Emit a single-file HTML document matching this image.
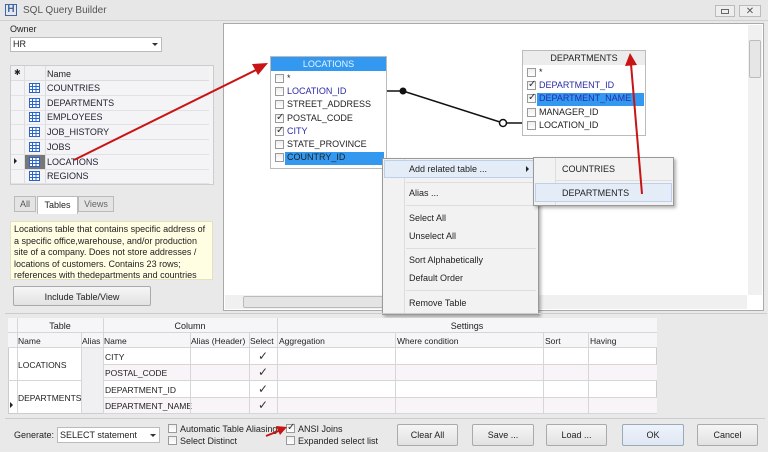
<!DOCTYPE html><html><head><style>
*{box-sizing:border-box;margin:0;padding:0}
body{width:768px;height:452px;overflow:hidden;background:#e9e9ea;font-family:"Liberation Sans",sans-serif;font-size:9px;color:#222;position:relative}
.a{position:absolute;white-space:nowrap}
.cb{position:absolute;width:9px;height:9px;border:1px solid #9a9a9a;background:linear-gradient(#eee,#fff)}
.ck::after{content:"✓";position:absolute;left:0;top:-3px;font-size:10px;color:#333}
.btn{position:absolute;border:1px solid #aaa;border-radius:2px;background:linear-gradient(#f6f6f6,#e2e2e2);text-align:center;line-height:20px;font-size:9px}
.tbl{color:#223}
.blue{color:#2a2aa8}
</style></head><body>
<div class="a" style="left:0;top:0;width:768px;height:21px;background:#e7e7e8;border-bottom:1px solid #d0d0d0"></div>
<div class="a" style="left:5px;top:4px;width:12px;height:12px;border:1px solid #3e66a8;color:#3e66a8;font-size:10px;line-height:10px;text-align:center;font-weight:bold">H</div>
<div class="a" style="left:23px;top:5px;font-size:10px;color:#555">SQL Query Builder</div>
<div class="a" style="left:715px;top:5px;width:20px;height:12px;border:1px solid #bbb;background:#eee"></div>
<div class="a" style="left:721px;top:9px;width:8px;height:5px;border:1px solid #666"></div>
<div class="a" style="left:739px;top:5px;width:22px;height:12px;border:1px solid #bbb;background:#eee;text-align:center;line-height:11px;color:#555;font-size:10px">✕</div>
<div class="a" style="left:10px;top:24px">Owner</div>
<div class="a" style="left:10px;top:37px;width:152px;height:15px;background:#fff;border:1px solid #bbb;padding-left:2px;line-height:13px">HR</div>
<div class="a" style="left:152px;top:43px;border-left:3px solid transparent;border-right:3px solid transparent;border-top:3px solid #333"></div>
<div class="a" style="left:10px;top:65px;width:204px;height:120px;background:#f4f4f6;border:1px solid #ccc"></div>
<div class="a" style="left:11px;top:66px;width:198px;height:15px;background:#f1f1f3;border-bottom:1px solid #ddd"></div>
<div class="a" style="left:14px;top:68px;font-size:8px">✱</div>
<div class="a" style="left:24px;top:66px;width:1px;height:117px;background:#ddd"></div>
<div class="a" style="left:45px;top:66px;width:1px;height:117px;background:#ddd"></div>
<div class="a" style="left:47px;top:69px">Name</div>
<div class="a" style="left:25px;top:155px;width:20px;height:14px;background:#777"></div>
<div class="a" style="left:14px;top:158px;border-top:3px solid transparent;border-bottom:3px solid transparent;border-left:3px solid #222"></div>
<div id="lst"></div>
<div class="a" style="left:14px;top:196px;width:22px;height:16px;border:1px solid #bbb;background:#e4e4e4;text-align:center;line-height:14px;color:#555">All</div>
<div class="a" style="left:37px;top:196px;width:41px;height:18px;border:1px solid #bbb;border-bottom:none;background:#fff;text-align:center;line-height:16px">Tables</div>
<div class="a" style="left:78px;top:196px;width:36px;height:16px;border:1px solid #bbb;background:#e4e4e4;text-align:center;line-height:14px;color:#666">Views</div>
<div class="a" style="left:10px;top:221px;width:203px;height:59px;background:#fffde2;border:1px solid #e4e0c0;padding:2px 3px;line-height:11.5px;white-space:normal;font-size:9px">Locations table that contains specific address of a specific office,warehouse, and/or production site of a company. Does not store addresses / locations of customers. Contains 23 rows; references with thedepartments and countries</div>
<div class="btn" style="left:13px;top:286px;width:138px;height:20px">Include Table/View</div>
<div class="a" style="left:223px;top:23px;width:541px;height:288px;background:#fff;border:1px solid #aaa"></div>
<div class="a" style="left:748px;top:25px;width:14px;height:270px;background:#f0f0f0"></div>
<div class="a" style="left:749px;top:40px;width:12px;height:38px;border:1px solid #bbb;border-radius:2px;background:#e6e6e6"></div>
<div class="a" style="left:225px;top:295px;width:522px;height:14px;background:#f0f0f0"></div>
<div class="a" style="left:243px;top:296px;width:140px;height:12px;border:1px solid #bbb;border-radius:2px;background:#e4e4e4"></div>
<div class="a" style="left:270px;top:56px;width:117px;height:113px;background:#fff;border:1px solid #bbb"></div>
<div class="a" style="left:271px;top:57px;width:115px;height:14px;background:#3399f0;color:#eaf4ff;text-align:center;line-height:14px">LOCATIONS</div>
<div class="a" style="left:285px;top:152px;width:99px;height:13px;background:#3399f0"></div>
<div id="loc"></div>
<div class="a" style="left:522px;top:50px;width:124px;height:86px;background:#fff;border:1px solid #bbb"></div>
<div class="a" style="left:523px;top:51px;width:122px;height:14px;background:#ececec;text-align:center;line-height:14px">DEPARTMENTS</div>
<div class="a" style="left:537px;top:93px;width:107px;height:13px;background:#3399f0"></div>
<div id="dep"></div>
<svg class="a" style="left:0;top:0" width="768" height="452">
<polyline points="387,91 403,91 503,123 522,123" fill="none" stroke="#111" stroke-width="1.5"/>
<circle cx="403" cy="91" r="3.5" fill="#111"/><circle cx="503" cy="123" r="3.5" fill="#fff" stroke="#111" stroke-width="1.5"/>
</svg>
<div class="a" style="left:382px;top:158px;width:157px;height:157px;background:#f2f2f2;border:1px solid #999;box-shadow:2px 2px 3px rgba(0,0,0,.3)"></div>
<div class="a" style="left:404px;top:159px;width:1px;height:155px;background:#ddd"></div>
<div class="a" style="left:384px;top:160px;width:153px;height:18px;background:#e4ecf7;border:1px solid #bcd0ea"></div>
<div class="a" style="left:409px;top:164px">Add related table ...</div>
<div class="a" style="left:526px;top:166px;border-top:3px solid transparent;border-bottom:3px solid transparent;border-left:3px solid #222"></div>
<div class="a" style="left:406px;top:182px;width:130px;height:1px;background:#ddd"></div>
<div class="a" style="left:409px;top:188px">Alias ...</div>
<div class="a" style="left:406px;top:205px;width:130px;height:1px;background:#ddd"></div>
<div class="a" style="left:409px;top:213px">Select All</div>
<div class="a" style="left:409px;top:231px">Unselect All</div>
<div class="a" style="left:406px;top:248px;width:130px;height:1px;background:#ddd"></div>
<div class="a" style="left:409px;top:255px">Sort Alphabetically</div>
<div class="a" style="left:409px;top:273px">Default Order</div>
<div class="a" style="left:406px;top:290px;width:130px;height:1px;background:#ddd"></div>
<div class="a" style="left:409px;top:298px">Remove Table</div>
<div class="a" style="left:533px;top:157px;width:141px;height:49px;background:#f2f2f2;border:1px solid #999;box-shadow:2px 2px 3px rgba(0,0,0,.3)"></div>
<div class="a" style="left:555px;top:158px;width:1px;height:47px;background:#ddd"></div>
<div class="a" style="left:562px;top:164px">COUNTRIES</div>
<div class="a" style="left:556px;top:180px;width:116px;height:1px;background:#ddd"></div>
<div class="a" style="left:535px;top:183px;width:137px;height:19px;background:#e4ecf7;border:1px solid #bcd0ea"></div>
<div class="a" style="left:562px;top:188px">DEPARTMENTS</div>
<div class="a" style="left:5px;top:313px;width:762px;height:1px;background:#ccc"></div>
<div class="a" style="left:8px;top:318px;width:649px;height:96px;background:#fff;border:1px solid #ccc"></div>
<div class="a" style="left:8px;top:318px;width:649px;height:30px;background:#f6f6f8"></div>
<div id="grid"></div>
<div class="a" style="left:5px;top:418px;width:760px;height:1px;background:#ccc"></div>
<div class="a" style="left:14px;top:430px">Generate:</div>
<div class="a" style="left:57px;top:427px;width:103px;height:16px;background:#fff;border:1px solid #bbb;padding-left:2px;line-height:14px">SELECT statement</div>
<div class="a" style="left:150px;top:434px;border-left:3px solid transparent;border-right:3px solid transparent;border-top:3px solid #333"></div>
<div class="cb" style="left:168px;top:424px"></div><div class="a" style="left:180px;top:424px">Automatic Table Aliasing</div>
<div class="cb" style="left:168px;top:436px"></div><div class="a" style="left:180px;top:436px">Select Distinct</div>
<div class="a" style="left:279px;top:423px;width:10px;height:10px;background:#e9e9ea"></div>
<div class="cb ck" style="left:286px;top:424px"></div><div class="a" style="left:298px;top:424px">ANSI Joins</div>
<div class="cb" style="left:286px;top:436px"></div><div class="a" style="left:298px;top:436px">Expanded select list</div>
<div class="btn" style="left:397px;top:424px;width:61px;height:22px">Clear All</div>
<div class="btn" style="left:472px;top:424px;width:62px;height:22px">Save ...</div>
<div class="btn" style="left:546px;top:424px;width:61px;height:22px">Load ...</div>
<div class="btn" style="left:622px;top:424px;width:62px;height:22px;background:linear-gradient(#eef3fb,#dfe7f3);border-color:#9ab">OK</div>
<div class="btn" style="left:697px;top:424px;width:61px;height:22px">Cancel</div>
<svg class="a" style="left:0;top:0" width="768" height="452">
<g stroke="#c81414" stroke-width="2" fill="#c81414">
<line x1="74" y1="160" x2="258" y2="69"/><polygon points="268,63 252,64 258,75" stroke="none"/>
<line x1="642" y1="194" x2="631" y2="64"/><polygon points="630,53 625,66 637,65" stroke="none"/>
<line x1="266" y1="436" x2="281" y2="430"/><polygon points="287,427 276,426 280,435" stroke="none"/>
</g></svg>
<script>
function h(id,s){document.getElementById(id).innerHTML=s}
var L=["COUNTRIES","DEPARTMENTS","EMPLOYEES","JOB_HISTORY","JOBS","LOCATIONS","REGIONS"],s="";
L.forEach(function(n,i){var y=81+i*14.7;
s+='<div class="a" style="left:11px;top:'+(y+14)+'px;width:198px;height:1px;background:#e2e2e6"></div>';
s+='<svg class="a" style="left:29px;top:'+(y+2)+'px" width="11" height="10"><rect x=".5" y=".5" width="10" height="9" fill="#fff" stroke="#2a64c8"/><path d="M0.5 3.5H10.5M0.5 6.5H10.5M3.5 0.5V9.5M7 0.5V9.5" stroke="#2a64c8"/></svg>';
s+='<div class="a tbl" style="left:47px;top:'+(y+2)+'px">'+n+'</div>'});h("lst",s);
var F=[["*",0,0],["LOCATION_ID",0,1],["STREET_ADDRESS",0,0],["POSTAL_CODE",1,0],["CITY",1,1],["STATE_PROVINCE",0,0],["COUNTRY_ID",0,0]];s="";
F.forEach(function(f,i){var y=73+i*13.2;s+='<div class="cb'+(f[1]?' ck':'')+'" style="left:275px;top:'+(y+1)+'px"></div><div class="a'+(f[2]?' blue':'')+'" style="left:287px;top:'+y+'px">'+f[0]+'</div>'});h("loc",s);
F=[["*",0,0],["DEPARTMENT_ID",1,1],["DEPARTMENT_NAME",1,1],["MANAGER_ID",0,0],["LOCATION_ID",0,0]];s="";
F.forEach(function(f,i){var y=67+i*13.2;s+='<div class="cb'+(f[1]?' ck':'')+'" style="left:527px;top:'+(y+1)+'px"></div><div class="a'+(f[2]?' blue':'')+'" style="left:539px;top:'+y+'px">'+f[0]+'</div>'});h("dep",s);
s="";
var R=["CITY","POSTAL_CODE","DEPARTMENT_ID","DEPARTMENT_NAME"];
R.forEach(function(n,i){var y=348+i*16.3;
if(i%2)s+='<div class="a" style="left:103px;top:'+y+'px;width:554px;height:16px;background:#f8f4f8"></div>';});
s+='<div class="a" style="left:81px;top:348px;width:22px;height:65px;background:#f0f0f2"></div>';
s+='<div class="a" style="left:17px;top:321px;width:86px;text-align:center">Table</div><div class="a" style="left:103px;top:321px;width:174px;text-align:center">Column</div><div class="a" style="left:277px;top:321px;width:380px;text-align:center">Settings</div>';
s+='<div class="a" style="left:8px;top:332px;width:649px;height:1px;background:#d6d6d6"></div>';
R.forEach(function(n,i){var y=348+i*16.3;
s+='<div class="a" style="left:103px;top:'+(y+16)+'px;width:554px;height:1px;background:#d6d6d6"></div>';
s+='<div class="a" style="left:105px;top:'+(y+4)+'px;font-size:8.5px">'+n+'</div><div class="a" style="left:258px;top:'+(y+1)+'px;font-size:12px;color:#333">✓</div>'});
[17,103,277].forEach(function(x){s+='<div class="a" style="left:'+x+'px;top:318px;width:1px;height:96px;background:#d6d6d6"></div>'});
[81,190,249,395,543,588].forEach(function(x){s+='<div class="a" style="left:'+x+'px;top:332px;width:1px;height:82px;background:#d6d6d6"></div>'});
var hd=[["Name",18],["Alias",82],["Name",104],["Alias (Header)",191],["Select",250],["Aggregation",279],["Where condition",397],["Sort",545],["Having",590]];
hd.forEach(function(a){s+='<div class="a" style="left:'+a[1]+'px;top:336px;font-size:8.5px">'+a[0]+'</div>'});
s+='<div class="a" style="left:8px;top:347px;width:649px;height:1px;background:#d6d6d6"></div>';
s+='<div class="a" style="left:8px;top:380px;width:73px;height:1px;background:#d6d6d6"></div>';
s+='<div class="a" style="left:18px;top:360px;font-size:8.5px">LOCATIONS</div><div class="a" style="left:18px;top:393px;font-size:8.5px">DEPARTMENTS</div>';
s+='<div class="a" style="left:10px;top:402px;border-top:3px solid transparent;border-bottom:3px solid transparent;border-left:3px solid #222"></div>';
h("grid",s);
</script>
</body></html>
